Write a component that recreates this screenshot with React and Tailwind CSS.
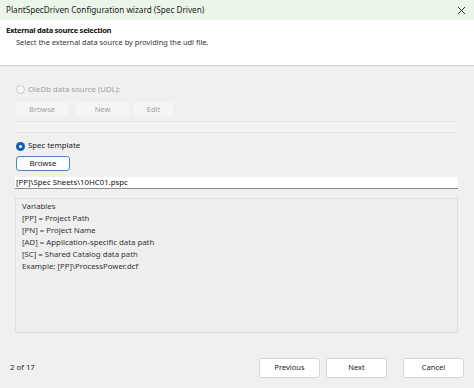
export default function App() {
  const font = { fontFamily: '"Noto Sans", "Open Sans", sans-serif' };
  const btn =
    "h-[15px] flex items-center justify-center bg-[#f5f5f5] text-[#a0a0a0] text-[7.5px]";
  const bigBtn =
    "w-[61px] h-[20px] flex items-center justify-center bg-white border border-[#d8d8d8] rounded-[3px] text-[7.5px] text-[#222]";
  return (
    <div className="w-[474px] h-[388px] flex flex-col bg-[#f0f0f0] overflow-hidden" style={font}>
      <div className="h-[20px] shrink-0 bg-[#ebf6e9] flex items-center justify-between pl-[6px] pr-[6px] text-[8.2px] text-[#1a1a1a]">
        <span>PlantSpecDriven Configuration wizard (Spec Driven)</span>
        <svg width="9" height="9" viewBox="0 0 10 10" className="mr-[2px]">
          <path d="M1 1 L9 9 M9 1 L1 9" stroke="#333" strokeWidth="1.1" />
        </svg>
      </div>
      <div className="h-[46px] shrink-0 bg-white border-b border-[#cfcfcf] flex flex-col pl-[6px] pt-[4px]">
        <div className="text-[7.6px] font-bold text-[#111] leading-[12px] tracking-[-0.3px]">External data source selection</div>
        <div className="text-[7.4px] text-[#333] leading-[12px] pl-[10px]">
          Select the external data source by providing the udl file.
        </div>
      </div>
      <div className="flex-1 flex flex-col pl-[15px] pr-[16px]">
        <div className="h-[17px] mt-[15px] flex items-center gap-[3px] pl-[1px]">
          <span className="w-[9px] h-[9px] rounded-full border border-[#c8c8c8] bg-[#f7f7f7]" />
          <span className="text-[7.8px] text-[#a0a0a0]">OleDb data source (UDL):</span>
        </div>
        <div className="flex mt-[4px] pl-[1px]">
          <div className={btn + " w-[52px]"}>Browse</div>
          <div className={btn + " w-[53px] ml-[8px]"}>New</div>
          <div className={btn + " w-[39px] ml-[5px]"}>Edit</div>
        </div>
        <div className="h-[12px] mt-[4px] ml-[1px] bg-[#f2f2f2] border-y border-[#e6e6e6]" />
        <div className="h-[10px] mt-[8px] flex items-center gap-[3px] pl-[1px]">
          <span className="w-[9px] h-[9px] rounded-full bg-[#0f5fb8] flex items-center justify-center">
            <span className="w-[3px] h-[3px] rounded-full bg-white" />
          </span>
          <span className="text-[7.8px] text-[#222]">Spec template</span>
        </div>
        <div className="w-[54px] h-[15px] mt-[5px] ml-[1px] flex items-center justify-center bg-[#fdfdfd] border border-[#4a86c8] rounded-[3px] text-[7.8px] text-[#222]">
          Browse
        </div>
        <div className="h-[12px] mt-[6px] bg-white border-b border-[#8a8a8a] flex items-center pl-[1px] text-[7.8px] text-[#111]">
          [PP]\Spec Sheets\10HC01.pspc
        </div>
        <div className="h-[135px] mt-[9px] border border-[#dedede] bg-[#efefef] flex flex-col pl-[6px] pt-[1px] text-[7.8px] text-[#333] leading-[12px]">
          <span>Variables</span>
          <span>[PP] = Project Path</span>
          <span>[PN] = Project Name</span>
          <span>[AD] = Application-specific data path</span>
          <span>[SC] = Shared Catalog data path</span>
          <span>Example: [PP]\ProcessPower.dcf</span>
        </div>
        <div className="flex items-center mt-[25px] -ml-[5px]">
          <span className="text-[7.8px] text-[#222]">2 of 17</span>
          <div className="flex-1" />
          <div className={bigBtn}>Previous</div>
          <div className={bigBtn + " ml-[6px]"}>Next</div>
          <div className={bigBtn + " ml-[16px] -mr-[6px]"}>Cancel</div>
        </div>
      </div>
    </div>
  );
}
